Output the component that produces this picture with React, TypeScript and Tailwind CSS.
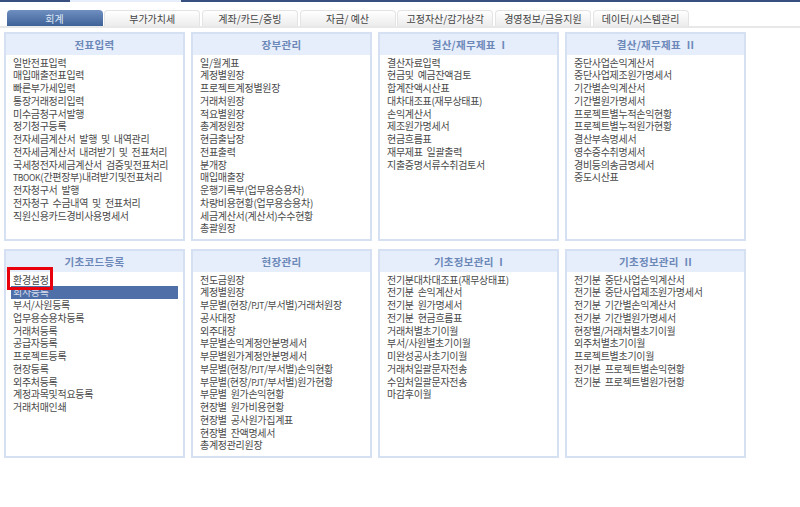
const tabs = ['회계', '부가가치세', '계좌/카드/증빙', '자금/ 예산', '고정자산/감가상각', '경영정보/금융지원', '데이터/시스템관리'];

const topPanels = [
  {
    title: '전표입력',
    items: ['일반전표입력', '매입매출전표입력', '빠른부가세입력', '통장거래정리입력', '미수금청구서발행', '정기청구등록', '전자세금계산서 발행 및 내역관리', '전자세금계산서 내려받기 및 전표처리', '국세청전자세금계산서 검증및전표처리', 'TBOOK(간편장부)내려받기및전표처리', '전자청구서 발행', '전자청구 수금내역 및 전표처리', '직원신용카드경비사용명세서'],
  },
  {
    title: '장부관리',
    items: ['일/월계표', '계정별원장', '프로젝트계정별원장', '거래처원장', '적요별원장', '총계정원장', '현금출납장', '전표출력', '분개장', '매입매출장', '운행기록부(업무용승용차)', '차량비용현황(업무용승용차)', '세금계산서(계산서)수수현황', '총괄원장'],
  },
  {
    title: '결산/재무제표 I',
    items: ['결산자료입력', '현금및 예금잔액검토', '합계잔액시산표', '대차대조표(재무상태표)', '손익계산서', '제조원가명세서', '현금흐름표', '재무제표 일괄출력', '지출증명서류수취검토서'],
  },
  {
    title: '결산/재무제표 II',
    items: ['중단사업손익계산서', '중단사업제조원가명세서', '기간별손익계산서', '기간별원가명세서', '프로젝트별누적손익현황', '프로젝트별누적원가현황', '결산부속명세서', '영수증수취명세서', '경비등의송금명세서', '중도시산표'],
  },
];

const bottomPanels = [
  {
    title: '기초코드등록',
    items: ['환경설정', '회사등록', '부서/사원등록', '업무용승용차등록', '거래처등록', '공급자등록', '프로젝트등록', '현장등록', '외주처등록', '계정과목및적요등록', '거래처매인쇄'],
  },
  {
    title: '현장관리',
    items: ['전도금원장', '계정별원장', '부문별(현장/PJT/부서별)거래처원장', '공사대장', '외주대장', '부문별손익계정안분명세서', '부문별원가계정안분명세서', '부문별(현장/PJT/부서별)손익현황', '부문별(현장/PJT/부서별)원가현황', '부문별 원가손익현황', '현장별 원가비용현황', '현장별 공사원가집계표', '현장별 잔액명세서', '총계정관리원장'],
  },
  {
    title: '기초정보관리 I',
    items: ['전기분대차대조표(재무상태표)', '전기분 손익계산서', '전기분 원가명세서', '전기분 현금흐름표', '거래처별초기이월', '부서/사원별초기이월', '미완성공사초기이월', '거래처일괄문자전송', '수임처일괄문자전송', '마감후이월'],
  },
  {
    title: '기초정보관리 II',
    items: ['전기분 중단사업손익계산서', '전기분 중단사업제조원가명세서', '전기분 기간별손익계산서', '전기분 기간별원가명세서', '현장별/거래처별초기이월', '외주처별초기이월', '프로젝트별초기이월', '전기분 프로젝트별손익현황', '전기분 프로젝트별원가현황'],
  },
];

// latin runs are half width in the reference
function Label({ text }: { text: string }) {
  return (
    <>
      {text.split(/(TBOOK|PJT)/).map((part, i) => (
        i % 2 === 1 ? <span key={i} className="text-[8.5px]">{part}</span> : part
      ))}
    </>
  );
}

function Panel({ title, items }: { title: string; items: string[] }) {
  return (
    <div className="flex h-[209px] w-[181px] flex-col border-2 border-[#d5e0f2] bg-white">
      <div className="flex h-[21px] shrink-0 items-center justify-center bg-[#e6edfb] text-[10.5px] font-semibold tracking-[0.3px] [word-spacing:3px] text-[#6b88b8]">{title}</div>
      <ul className="pt-[1.5px] pl-[2px]">
        {items.map((item) => {
          const selected = item === '회사등록';
          return (
            <li key={item} className={`relative h-[12.75px] text-[10px] leading-[12.75px] tracking-[-0.3px] [word-spacing:2px] whitespace-nowrap ${selected ? 'mr-[5px] ml-[3px] bg-[#4f6fa8] pl-[2px] text-[#d5dcec]' : 'pl-[5px] text-[#4a4a4a]'}`}>
              <Label text={item} />
              {item === '환경설정' && <span className="absolute top-[-6.5px] left-[-1px] z-10 h-[23px] w-[46px] border-[3px] border-[#e8000d]" />}
            </li>
          );
        })}
      </ul>
    </div>
  );
}

export default function App() {
  return (
    <div className="h-[507px] w-[800px] overflow-hidden bg-white font-['Noto_Sans_CJK_KR',sans-serif]">
      <div className="flex h-[2px]">
        <div className="w-[70px] bg-[#37507f]" />
        <div className="w-[111px] bg-[#e6edfb]" />
        <div className="flex-1 bg-[#37507f]" />
      </div>
      <div className="box-content flex h-[16px] gap-[1.7px] border-b-2 border-[#e8e8e8] pt-[8px] pl-[6.5px]">
        {tabs.map((t, i) => (
          <div key={t} className={i === 0
            ? 'flex h-[16px] w-[96px] items-center justify-center rounded-t-sm bg-gradient-to-b from-[#6f8fc0] to-[#3f6298] text-[10px] text-[#dfe8f5]'
            : 'flex h-[16px] w-[96px] items-center justify-center rounded-t-sm border-x border-t border-[#e4e4e4] bg-gradient-to-b from-white to-[#ececec] text-[10px] text-[#444444]'}>
            {t}
          </div>
        ))}
      </div>
      <div className="mt-[4px] flex gap-[6px] pl-[4px]">
        {topPanels.map((p) => <Panel key={p.title} {...p} />)}
      </div>
      <div className="mt-[8px] flex gap-[6px] pl-[4px]">
        {bottomPanels.map((p) => <Panel key={p.title} {...p} />)}
      </div>
    </div>
  );
}
